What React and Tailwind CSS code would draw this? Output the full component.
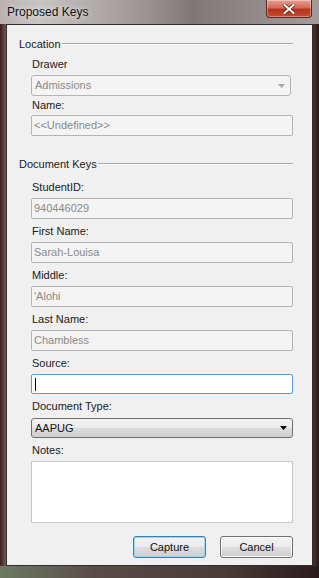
import React from 'react';

const font = { fontFamily: '"Liberation Sans", Arial, sans-serif' };

function SectionHeader({ title }) {
    return (
        <div className="flex items-center h-[14px] pl-[12px] pr-[19px]">
            <span className="text-[11px] leading-[14px] text-[#1a1a1a] pr-[1px]">{title}</span>
            <div className="flex-1 flex flex-col">
                <div className="h-px bg-[#a9a9a9]" />
                <div className="h-px bg-white" />
            </div>
        </div>
    );
}

function Label({ children }) {
    return <div className="h-[14px] text-[11px] leading-[14px] text-[#1a1a1a] pl-[25px]">{children}</div>;
}

function DisabledBox({ value, className = '' }) {
    return (
        <div className={`h-[21px] ml-[24px] mr-[19px] border border-[#b4b4b4] bg-[#f4f4f4] rounded-[2px] flex items-center pl-[2px] text-[11px] text-[#8a8a8a] ${className}`}>
            {value}
        </div>
    );
}

function Field({ label, value, first }) {
    return (
        <div className={first ? '' : 'mt-[5px]'}>
            <Label>{label}</Label>
            <DisabledBox value={value} className="mt-[4px]" />
        </div>
    );
}

export default function App() {
    return (
        <div
            style={font}
            className="w-[319px] h-[578px] overflow-hidden flex flex-col bg-[linear-gradient(90deg,#3a1e1e_0%,#7a5a5a_2%,#9a9292_30%,#8a8282_70%,#5a4040_97%,#2a1a1a_100%)]"
        >
            {/* title bar */}
            <div className="h-[24px] flex items-start justify-between bg-[linear-gradient(90deg,#b9b2b1_0%,#c9c5c4_12%,#9c9594_45%,#7f7877_60%,#a39c9b_100%)]">
                <span className="mt-[5px] ml-[7px] text-[12px] leading-[14px] text-[#141414] [text-shadow:0_0_6px_rgba(255,255,255,0.8)]">
                    Proposed Keys
                </span>
                <div className="mr-[7px] w-[46px] h-[18px] rounded-b-[4px] border border-t-0 border-[#5a2620] bg-[linear-gradient(180deg,#e7a092_0%,#d16a55_45%,#b8321c_55%,#c84a30_100%)] flex items-center justify-center shadow-[inset_0_0_0_1px_rgba(255,255,255,0.35)]">
                    <svg width="12" height="10" viewBox="0 0 12 10">
                        <path d="M1.5 1 L10.5 9 M10.5 1 L1.5 9" stroke="#4a1a12" strokeWidth="3.4" strokeLinecap="square" />
                        <path d="M1.5 1 L10.5 9 M10.5 1 L1.5 9" stroke="#ffffff" strokeWidth="2" strokeLinecap="square" />
                    </svg>
                </div>
            </div>

            {/* client area */}
            <div className="mx-[6px] h-[542px] border border-[#2e2e2e] bg-[#f0f0f0] flex flex-col">
                <div className="mt-[12px]">
                    <SectionHeader title="Location" />
                </div>

                <div className="mt-[6px]">
                    <Label>Drawer</Label>
                    <div className="mt-[4px] h-[21px] ml-[24px] mr-[21px] border border-[#b4b4b4] bg-[#f4f4f4] rounded-[3px] flex items-center justify-between pl-[3px] pr-[5px] text-[11px] text-[#8a8a8a]">
                        <span>Admissions</span>
                        <svg width="7" height="4" viewBox="0 0 7 4">
                            <path d="M0 0 H7 L3.5 4 Z" fill="#a8a8a8" />
                        </svg>
                    </div>
                </div>

                <div className="mt-[2px]">
                    <Label>Name:</Label>
                    <DisabledBox value="<<Undefined>>" className="mt-[3px]" />
                </div>

                <div className="mt-[21px]">
                    <SectionHeader title="Document Keys" />
                </div>

                <div className="mt-[9px]">
                    <Field label="StudentID:" value="940446029" first />
                    <Field label="First Name:" value="Sarah-Louisa" />
                    <Field label="Middle:" value="'Alohi" />
                    <Field label="Last Name:" value="Chambless" />

                    <div className="mt-[5px]">
                        <Label>Source:</Label>
                        <div className="mt-[4px] h-[20px] ml-[24px] mr-[19px] border border-[#5b9bd5] bg-white rounded-[2px] flex items-center pl-[3px]">
                            <div className="w-px h-[13px] bg-black" />
                        </div>
                    </div>

                    <div className="mt-[5px]">
                        <Label>Document Type:</Label>
                        <div className="mt-[5px] h-[20px] ml-[24px] mr-[19px] border border-[#707070] rounded-[3px] bg-[linear-gradient(180deg,#f3f3f3_0%,#ebebeb_50%,#dddddd_51%,#cfcfcf_100%)] flex items-center justify-between pl-[3px] pr-[5px] text-[11px] text-[#111]">
                            <span>AAPUG</span>
                            <svg width="7" height="4" viewBox="0 0 7 4">
                                <path d="M0 0 H7 L3.5 4 Z" fill="#000" />
                            </svg>
                        </div>
                    </div>

                    <div className="mt-[5px]">
                        <Label>Notes:</Label>
                        <div className="mt-[4px] h-[62px] ml-[24px] mr-[19px] border border-[#c8c8c8] bg-white" />
                    </div>
                </div>

                <div className="mt-[13px] flex justify-end gap-[14px] mr-[19px]">
                    <div className="w-[73px] h-[22px] rounded-[3px] border border-[#3c7fb1] bg-[linear-gradient(180deg,#f2f2f2_0%,#ebebeb_50%,#dddddd_51%,#cfcfcf_100%)] shadow-[inset_0_0_0_1px_#9dd5f5] flex items-center justify-center text-[11px] text-[#111]">
                        Capture
                    </div>
                    <div className="w-[73px] h-[22px] rounded-[3px] border border-[#707070] bg-[linear-gradient(180deg,#f2f2f2_0%,#ebebeb_50%,#dddddd_51%,#cfcfcf_100%)] shadow-[inset_0_0_0_1px_#fcfcfc] flex items-center justify-center text-[11px] text-[#111]">
                        Cancel
                    </div>
                </div>
            </div>

            <div className="flex-1 bg-[linear-gradient(90deg,#6c7a62_0%,#5a4a48_30%,#4a3a3a_70%,#2a1c1c_100%)]" />
        </div>
    );
}
